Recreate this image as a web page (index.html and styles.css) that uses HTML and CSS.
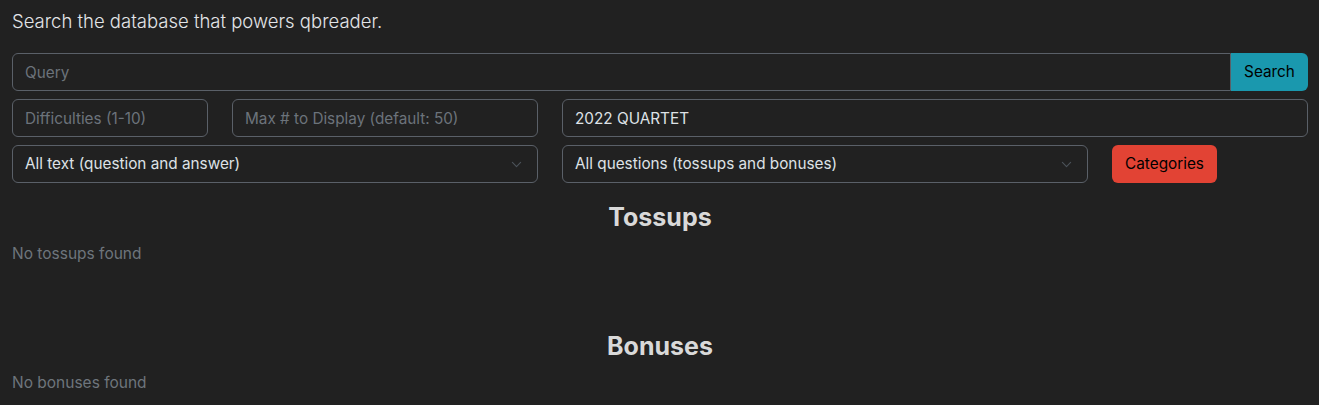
FILE: index.html
```html
<!DOCTYPE html>
<html lang="en">
<head>
<meta charset="utf-8">
<title>Database</title>
<link rel="stylesheet" href="styles.css">
</head>
<body>
<div class="container">
  <p class="lead">Search the database that powers qbreader.</p>
  <form class="form">
    <div class="input-group">
      <input class="control grow" type="text" placeholder="Query">
      <button type="button" class="btn btn-info">Search</button>
    </div>
    <div class="row">
      <div class="col-5 subrow">
        <input class="control diff" type="text" placeholder="Difficulties (1-10)">
        <input class="control max" type="text" placeholder="Max # to Display (default: 50)">
      </div>
      <div class="col-7">
        <input class="control" type="text" value="2022 QUARTET">
      </div>
    </div>
    <div class="row">
      <div class="col-5">
        <div class="select"><span>All text (question and answer)</span>
          <svg class="chev" viewBox="0 0 16 16" width="11" height="11"><path d="M2 5l6 6 6-6" fill="none" stroke="currentColor" stroke-width="1.6" stroke-linecap="round" stroke-linejoin="round"/></svg>
        </div>
      </div>
      <div class="col-5">
        <div class="select"><span>All questions (tossups and bonuses)</span>
          <svg class="chev" viewBox="0 0 16 16" width="11" height="11"><path d="M2 5l6 6 6-6" fill="none" stroke="currentColor" stroke-width="1.6" stroke-linecap="round" stroke-linejoin="round"/></svg>
        </div>
      </div>
      <div class="col-2">
        <button type="button" class="btn btn-danger">Categories</button>
      </div>
    </div>
  </form>
  <section class="results">
    <h3 class="heading">Tossups</h3>
    <p class="muted">No tossups found</p>
  </section>
  <section class="results bonuses">
    <h3 class="heading">Bonuses</h3>
    <p class="muted">No bonuses found</p>
  </section>
</div>
</body>
</html>
```

FILE: styles.css
```css
* { box-sizing: border-box; }
html, body {
  margin: 0;
  background: #212121;
  color: #dee2e6;
  font-family: Inter, "Noto Sans", "Liberation Sans", sans-serif;
  font-size: 16px;
  line-height: 1.5;
}
.container {
  padding: 0 11px 0 12px;
}
.lead {
  font-size: 18.5px;
  font-weight: 300;
  margin: 6px 0 17px;
  line-height: 30px;
  color: #e3e5e8;
}
.form {
  display: flex;
  flex-direction: column;
  gap: 8px;
}
.input-group {
  display: flex;
}
.control {
  display: block;
  width: 100%;
  height: 38px;
  background: #212121;
  border: 1px solid #5a6068;
  border-radius: 6px;
  color: #dee2e6;
  font: inherit;
  font-size: 15.3px;
  padding: 6px 12px;
  outline: none;
}
.control::placeholder { color: #6c737b; }
.input-group .control {
  border-top-right-radius: 0;
  border-bottom-right-radius: 0;
}
.grow { flex: 1; }
.btn {
  height: 38px;
  border: 0;
  border-radius: 6px;
  font: inherit;
  font-size: 15.3px;
  color: #000;
  padding: 0 12px;
}
.input-group .btn {
  border-top-left-radius: 0;
  border-bottom-left-radius: 0;
  width: 77px;
}
.btn-info { background: #1a98ae; }
.btn-danger { background: #e24334; width: 105px; }
.row {
  display: flex;
  gap: 24px;
}
.col-5 { flex: 0 0 526px; }
.col-7 { flex: 1; }
.col-2 { flex: 1; }
.subrow {
  display: flex;
  gap: 24px;
}
.diff { width: 196px; flex: 0 0 196px; }
.max { flex: 1; }
.select {
  height: 38px;
  border: 1px solid #5a6068;
  border-radius: 6px;
  display: flex;
  align-items: center;
  justify-content: space-between;
  padding: 1px 15px 0 12px;
  font-size: 15.3px;
  color: #dee2e6;
}
.chev { color: #4c535a; }
.results {
  margin-top: 18px;
}
.heading {
  text-align: center;
  font-size: 25px;
  font-weight: 700;
  line-height: 32px;
  margin: 0 0 9px;
  color: #d9d9d9;
}
.muted {
  color: #6e757c;
  font-size: 15.5px;
  margin: 0;
  line-height: 24px;
}
.bonuses {
  margin-top: 64px;
}
```
